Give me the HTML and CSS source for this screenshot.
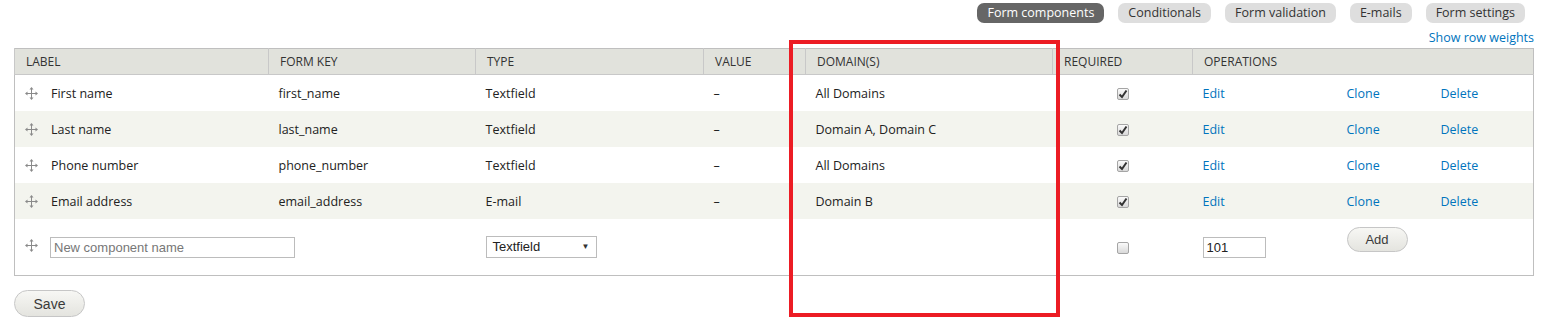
FILE: index.html
```html
<!DOCTYPE html>
<html lang="en">
<head>
  <meta charset="UTF-8" />
  <title>Form components</title>
  <link rel="stylesheet" href="styles.css">
</head>
<body>
  <div class="page">
    <ul class="tabs">
      <li class="tab active">Form components</li>
      <li class="tab">Conditionals</li>
      <li class="tab">Form validation</li>
      <li class="tab">E-mails</li>
      <li class="tab">Form settings</li>
    </ul>
    <div class="weights"><a href="#">Show row weights</a></div>

    <table class="components">
      <colgroup>
        <col class="c-label"><col class="c-key"><col class="c-type"><col class="c-value">
        <col class="c-domain"><col class="c-req"><col class="c-edit"><col class="c-clone"><col class="c-delete">
      </colgroup>
      <thead>
        <tr>
          <th>Label</th>
          <th>Form key</th>
          <th>Type</th>
          <th>Value</th>
          <th>Domain(s)</th>
          <th>Required</th>
          <th colspan="3">Operations</th>
        </tr>
      </thead>
      <tbody>
        <tr>
          <td><span class="drag"></span>First name</td>
          <td>first_name</td>
          <td>Textfield</td>
          <td>–</td>
          <td>All Domains</td>
          <td class="center"><span class="check on"></span></td>
          <td><a href="#">Edit</a></td>
          <td><a href="#">Clone</a></td>
          <td><a href="#">Delete</a></td>
        </tr>
        <tr class="even">
          <td><span class="drag"></span>Last name</td>
          <td>last_name</td>
          <td>Textfield</td>
          <td>–</td>
          <td>Domain A, Domain C</td>
          <td class="center"><span class="check on"></span></td>
          <td><a href="#">Edit</a></td>
          <td><a href="#">Clone</a></td>
          <td><a href="#">Delete</a></td>
        </tr>
        <tr>
          <td><span class="drag"></span>Phone number</td>
          <td>phone_number</td>
          <td>Textfield</td>
          <td>–</td>
          <td>All Domains</td>
          <td class="center"><span class="check on"></span></td>
          <td><a href="#">Edit</a></td>
          <td><a href="#">Clone</a></td>
          <td><a href="#">Delete</a></td>
        </tr>
        <tr class="even">
          <td><span class="drag"></span>Email address</td>
          <td>email_address</td>
          <td>E-mail</td>
          <td>–</td>
          <td>Domain B</td>
          <td class="center"><span class="check on"></span></td>
          <td><a href="#">Edit</a></td>
          <td><a href="#">Clone</a></td>
          <td><a href="#">Delete</a></td>
        </tr>
        <tr class="new-row">
          <td><span class="drag"></span><input type="text" class="name-input" placeholder="New component name"></td>
          <td></td>
          <td>
            <div class="select">Textfield<span class="arrow">▼</span></div>
          </td>
          <td></td>
          <td></td>
          <td class="center"><span class="check"></span></td>
          <td><input type="text" class="weight-input" value="101"></td>
          <td class="add-cell"><button class="btn add">Add</button></td>
          <td></td>
        </tr>
      </tbody>
    </table>

    <button class="btn save">Save</button>

    <!-- annotation box round the domain column -->
    <div class="highlight"></div>
  </div>

  <script>
    // drag handle and check mark are the same svg everywhere
    const dragSvg = '<svg width="13" height="13" viewBox="0 0 13 13"><g fill="none" stroke="#8a8a8a" stroke-width="1"><path d="M6.5 1v11M1 6.5h11"/></g><g fill="#8a8a8a"><path d="M6.5 0L4.5 2.5h4z"/><path d="M6.5 13L4.5 10.5h4z"/><path d="M0 6.5L2.5 4.5v4z"/><path d="M13 6.5L10.5 4.5v4z"/></g></svg>';
    const checkSvg = '<svg width="10" height="10" viewBox="0 0 10 10"><path d="M1.5 5.5L4 8L8.5 1.5" fill="none" stroke="#333" stroke-width="2"/></svg>';
    document.querySelectorAll('.drag').forEach(el => el.innerHTML = dragSvg);
    document.querySelectorAll('.check.on').forEach(el => el.innerHTML = checkSvg);
  </script>
</body>
</html>
```

FILE: styles.css
```css
body {
  margin: 0;
  font-family: "Open Sans", "Noto Sans", sans-serif;
  font-size: 12px;
  color: #222;
  background: #fff;
}
a {
  color: #0074bd;
  text-decoration: none;
}
.page {
  position: relative;
  padding: 3px 9px 0 14px;
}
.tabs {
  list-style: none;
  margin: 0 9px 0 0;
  padding: 0;
  display: flex;
  justify-content: flex-end;
  gap: 14px;
}
.tab {
  height: 20px;
  line-height: 20px;
  padding: 0 10px;
  border-radius: 7px;
  background: #dedede;
  color: #333;
  font-size: 12.5px;
}
.tab.active {
  background: #666;
  color: #fff;
}
.weights {
  text-align: right;
  height: 25px;
  line-height: 30px;
  font-size: 12.5px;
}
.components {
  width: 1519px;
  table-layout: fixed;
  border-collapse: collapse;
  border: 1px solid #bfbfbf;
}
.c-label { width: 254px; }
.c-key { width: 207px; }
.c-type { width: 228px; }
.c-value { width: 102px; }
.c-domain { width: 247px; }
.c-req { width: 140px; }
.c-edit { width: 144px; }
.c-clone { width: 94px; }
.c-delete { width: 103px; }
th {
  height: 25px;
  padding: 0 11px;
  text-align: left;
  font-weight: normal;
  text-transform: uppercase;
  color: #333;
  background: #e1e2dc;
  border-bottom: 1px solid #c8c8c8;
  border-left: 1px solid #c8c8c8;
}
td {
  height: 36px;
  padding: 0 10px;
  font-size: 12.5px;
  white-space: nowrap;
}
.center {
  text-align: center;
}
tr.even td {
  background: #f3f4ee;
}
.drag {
  display: inline-block;
  width: 13px;
  height: 13px;
  margin: 0 13px 0 0;
  vertical-align: -2px;
}
.drag svg {
  display: block;
}
.check {
  display: inline-block;
  box-sizing: border-box;
  width: 12px;
  height: 12px;
  border: 1px solid #a5a5a5;
  border-radius: 2px;
  background: linear-gradient(#fafafa, #d9d9d9);
  vertical-align: middle;
}
.check svg {
  display: block;
}
.new-row td {
  height: 56px;
}
.new-row .drag {
  margin-right: 12px;
}
.name-input,
.weight-input {
  box-sizing: border-box;
  height: 21px;
  padding: 1px 3px;
  border: 1px solid #bcbcbc;
  font-family: "Liberation Sans", Arial, sans-serif;
  font-size: 13px;
  color: #222;
  vertical-align: middle;
}
.name-input {
  width: 245px;
}
.name-input::placeholder {
  color: #777;
}
.weight-input {
  width: 63px;
}
.select {
  box-sizing: border-box;
  width: 111px;
  height: 22px;
  line-height: 20px;
  padding: 0 6px;
  border: 1px solid #bcbcbc;
  font-family: "Liberation Sans", Arial, sans-serif;
  font-size: 13px;
  color: #222;
  display: flex;
  justify-content: space-between;
}
.select .arrow {
  font-size: 8px;
  color: #333;
}
.btn {
  font-family: "Liberation Sans", Arial, sans-serif;
  color: #3a3a3a;
  border: 1px solid #c6c6c6;
  border-radius: 14px;
  background: linear-gradient(#f7f7f4, #e4e4df);
  padding: 0;
}
.add-cell {
  vertical-align: top;
}
.add {
  margin-top: 8px;
  width: 61px;
  height: 25px;
  font-size: 13px;
}
.save {
  margin-top: 14px;
  width: 71px;
  height: 27px;
  font-size: 14px;
}
.highlight {
  position: absolute;
  left: 789px;
  top: 40px;
  width: 263px;
  height: 269px;
  border: 4px solid #ec1c24;
}
```
